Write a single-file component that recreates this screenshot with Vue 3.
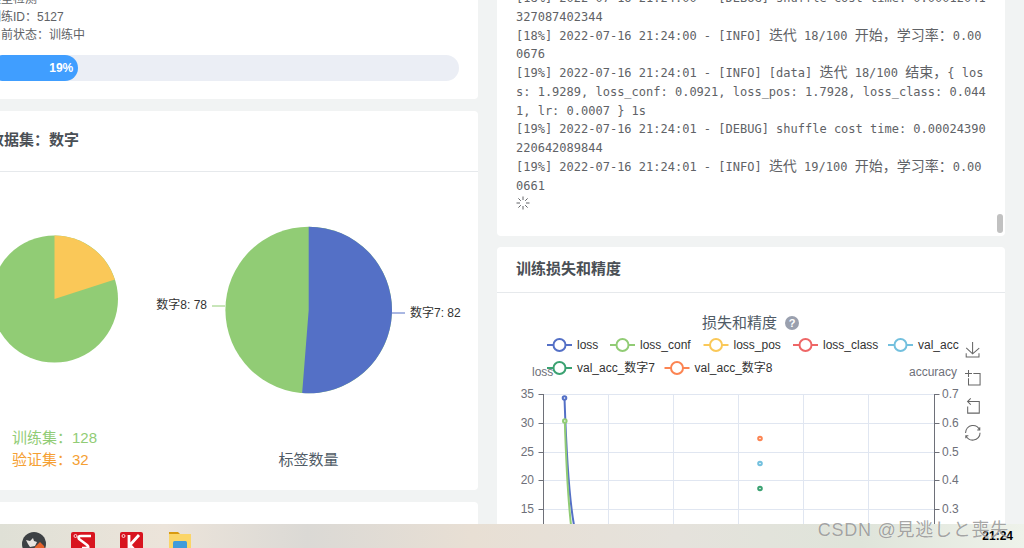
<template>
  <div class="screen">
    <div class="page">
      <div class="col col-left">
        <section class="card info-card">
          <p v-for="line in infoLines" :key="line" class="info-line">{{ line }}</p>
          <div class="progress">
            <div class="progress-bar" :style="{ width: progress + '%' }">{{ progress }}%</div>
          </div>
        </section>

        <section class="card data-card">
          <header class="card-head data-head">数据集：数字</header>
          <div class="data-body">
            <div class="data-split">
              <svg class="split-pie" viewBox="0 0 169 160" width="169" height="160">
                <circle cx="84.5" cy="80" r="63.5" fill="#91cc75" />
                <path :d="slice(84.5, 80, 63.5, 0, 72)" fill="#fac858" />
              </svg>
              <div class="split-text">
                <div class="split-train">训练集：128</div>
                <div class="split-val">验证集：32</div>
              </div>
            </div>
            <div class="data-labels">
              <svg class="label-pie" viewBox="0 0 339 190" width="339" height="190">
                <circle cx="169.7" cy="85" r="83.3" fill="#91cc75" />
                <path :d="slice(169.7, 85, 83.3, 0, 184.5)" fill="#5470c6" />
                <path d="M73 81h13" stroke="#91cc75" fill="none" />
                <path d="M253 88h13" stroke="#5470c6" fill="none" />
                <text x="68" y="84" text-anchor="end" class="pie-label">数字8: 78</text>
                <text x="271" y="92" class="pie-label">数字7: 82</text>
              </svg>
              <div class="label-title">标签数量</div>
            </div>
          </div>
        </section>

        <section class="card empty-card"></section>
      </div>

      <div class="col col-right">
        <section class="card log-card">
          <div v-for="(line, i) in logLines" :key="i" class="log-line">
            <template v-for="(part, j) in splitLine(line)" :key="j">
              <span v-if="part.zh" class="log-zh">{{ part.text }}</span>
              <template v-else>{{ part.text }}</template>
            </template>
          </div>
          <svg class="spinner" viewBox="0 0 14 14" width="14" height="14">
            <path d="M7 0.5v3.5M7 10v3.5M0.5 7h3.5M10 7h3.5M2.4 2.4l2.4 2.4M9.2 9.2l2.4 2.4M11.6 2.4L9.2 4.8M4.8 9.2l-2.4 2.4" stroke="#606266" stroke-width="1" fill="none" />
          </svg>
          <div class="log-thumb"></div>
        </section>

        <section class="card chart-card">
          <header class="card-head chart-head">训练损失和精度</header>
          <svg class="chart" viewBox="0 0 508 240" width="508" height="240">
            <!-- grid -->
            <g stroke="#e0e6f1" fill="none">
              <path v-for="y in gridY" :key="y" :d="`M46.5 ${y}H437`" />
              <path v-for="x in gridX" :key="x" :d="`M${x} 101V240`" />
            </g>
            <!-- axes -->
            <g stroke="#6e7079" fill="none">
              <path d="M46.5 101V240M437.5 101V240" />
              <path v-for="y in gridY" :key="'t' + y" :d="`M41.5 ${y}h5M437.5 ${y}h5`" />
            </g>
            <g class="tick">
              <text v-for="(t, i) in leftTicks" :key="t" x="37" :y="gridY[i] + 3" text-anchor="end">{{ t }}</text>
              <text v-for="(t, i) in rightTicks" :key="t" x="445" :y="gridY[i] + 3">{{ t }}</text>
              <text x="35" y="83">loss</text>
              <text x="412" y="83">accuracy</text>
            </g>

            <!-- series -->
            <path d="M67.5 105C69 150 72 205 77 232" stroke="#5470c6" stroke-width="2" fill="none" />
            <path d="M67.8 128C69 165 71 205 74 232" stroke="#91cc75" stroke-width="2" fill="none" />
            <circle cx="67.5" cy="105" r="1.8" fill="#fff" stroke="#5470c6" stroke-width="2" />
            <circle cx="67.8" cy="128" r="1.8" fill="#fff" stroke="#91cc75" stroke-width="2" />
            <circle cx="263" cy="145.5" r="1.8" fill="#fff" stroke="#fc8452" stroke-width="2" />
            <circle cx="263" cy="170.5" r="1.8" fill="#fff" stroke="#73c0de" stroke-width="2" />
            <circle cx="263" cy="195.5" r="1.8" fill="#fff" stroke="#3ba272" stroke-width="2" />

            <!-- title -->
            <text x="205" y="35" class="chart-title">损失和精度</text>
            <circle cx="295" cy="30" r="7" fill="#9aa0ae" />
            <text x="295" y="34" text-anchor="middle" class="help">?</text>

            <!-- legend -->
            <g v-for="item in legend" :key="item.name">
              <path :d="`M${item.x} ${item.y}h25`" :stroke="item.color" stroke-width="2" fill="none" />
              <circle :cx="item.x + 12.5" :cy="item.y" r="6" fill="#fff" :stroke="item.color" stroke-width="2" />
              <text :x="item.x + 30" :y="item.y + 4" class="legend-text">{{ item.name }}</text>
            </g>

            <!-- toolbox -->
            <g v-for="tool in tools" :key="tool.y" :transform="`translate(468 ${tool.y}) scale(0.26)`">
              <path :d="tool.d" stroke="#666" stroke-width="4" fill="none" />
            </g>
          </svg>
        </section>
      </div>
    </div>

    <footer class="taskbar">
      <div class="task-icons">
        <svg viewBox="0 0 24 24" width="24" height="24">
          <circle cx="12" cy="12" r="12" fill="#3d4144" />
          <path d="M4 8l4 1 3-3 1 3 3 1-2 4-5 1-2-3z" fill="#e8e4e0" />
          <path d="M9 24l4-9 5-5 4 4 2 6-5 5z" fill="#e5622c" />
        </svg>
        <svg viewBox="0 0 24 24" width="24" height="24">
          <rect width="24" height="24" rx="2" fill="#d8141f" />
          <circle cx="4.5" cy="4" r="1.5" fill="none" stroke="#fff" stroke-width="0.8" />
          <path d="M20 4H10Q6.5 4 8 7l8 6q3 3-1 3H11" stroke="#fff" stroke-width="2.6" fill="none" />
        </svg>
        <svg viewBox="0 0 24 24" width="24" height="24">
          <rect width="23" height="24" rx="2" fill="#d8141f" />
          <circle cx="3.5" cy="4" r="1.5" fill="none" stroke="#fff" stroke-width="0.8" />
          <path d="M9 3v21M19 3l-9 10 10 11" stroke="#fff" stroke-width="2.8" fill="none" />
        </svg>
        <svg viewBox="0 0 22 24" width="22" height="24">
          <path d="M0 0h9l2 2v4H0z" fill="#d99a10" />
          <rect y="2" width="22" height="22" fill="#fbd568" />
          <rect x="4" y="9" width="14" height="15" rx="1.5" fill="#3f9bdc" />
        </svg>
      </div>
      <span class="clock">21:24</span>
    </footer>
    <div class="watermark">CSDN @見逃しと喪失</div>
  </div>
</template>

<script setup>
const progress = 19

const infoLines = ['模型检测', '训练ID：5127', '当前状态：训练中']

const logLines = [
  '[18%] 2022-07-16 21:24:00 - [DEBUG] shuffle cost time: 0.00012041',
  '327087402344',
  '[18%] 2022-07-16 21:24:00 - [INFO] 迭代 18/100 开始，学习率：0.00',
  '0676',
  '[19%] 2022-07-16 21:24:01 - [INFO] [data] 迭代 18/100 结束，{ los',
  's: 1.9289, loss_conf: 0.0921, loss_pos: 1.7928, loss_class: 0.044',
  '1, lr: 0.0007 } 1s',
  '[19%] 2022-07-16 21:24:01 - [DEBUG] shuffle cost time: 0.00024390',
  '220642089844',
  '[19%] 2022-07-16 21:24:01 - [INFO] 迭代 19/100 开始，学习率：0.00',
  '0661'
]

// cjk runs are set larger than the mono text
function splitLine(line) {
  return line.split(/([\u4e00-\u9fff，：]+)/).filter(Boolean).map((text) => ({
    text,
    zh: /[\u4e00-\u9fff，：]/.test(text)
  }))
}

function slice(cx, cy, r, from, to) {
  const pt = (deg) => {
    const a = (deg - 90) * Math.PI / 180
    return `${cx + r * Math.cos(a)} ${cy + r * Math.sin(a)}`
  }
  return `M${cx} ${cy}L${pt(from)}A${r} ${r} 0 ${to - from > 180 ? 1 : 0} 1 ${pt(to)}Z`
}

const gridY = [101.5, 130.5, 159.5, 187.5, 216.5]
const gridX = [111.5, 176.5, 241.5, 306.5, 371.5]
const leftTicks = ['35', '30', '25', '20', '15']
const rightTicks = ['0.7', '0.6', '0.5', '0.4', '0.3']

const legend = [
  { name: 'loss', x: 50, y: 52, color: '#5470c6' },
  { name: 'loss_conf', x: 113, y: 52, color: '#91cc75' },
  { name: 'loss_pos', x: 206.5, y: 52, color: '#fac858' },
  { name: 'loss_class', x: 296, y: 52, color: '#ee6666' },
  { name: 'val_acc', x: 391, y: 52, color: '#73c0de' },
  { name: 'val_acc_数字7', x: 50, y: 75, color: '#3ba272' },
  { name: 'val_acc_数字8', x: 167.5, y: 75, color: '#fc8452' }
]

const tools = [
  { y: 49, d: 'M4.7,22.9L29.3,45.5L54.7,23.4M4.6,43.6L4.6,58L53.8,58L53.8,43.6M29.2,45.1L29.2,0' },
  { y: 77, d: 'M0,13.5h26.9 M13.5,26.9V0 M32.1,13.5H58V58H13.5 V32.1' },
  { y: 105, d: 'M22,1.4L9.9,13.5l12.3,12.3 M10.3,13.5H54.9v44.6 H10.3v-25.6' },
  { y: 132, d: 'M3.8,33.4 M47,18.9h9.8V8.7 M56.3,20.1 C52.1,9,40.5,0.6,26.8,2.1C12.6,3.7,1.6,16.2,2.1,30.6 M13,41.1H3.1v10.2 M3.7,39.9c4.2,11.1,15.8,19.5,29.5,18 c14.2-1.6,25.2-14.1,24.7-28.5' }
]
</script>

<style>
html, body {
  margin: 0;
  overflow: hidden;
}
</style>

<style scoped>
.screen {
  position: relative;
  display: flex;
  flex-direction: column;
  width: 1024px;
  height: 548px;
  overflow: hidden;
  background: #f1f3f3;
  font-family: "Liberation Sans", "Noto Sans CJK SC", sans-serif;
}

.page {
  flex: 1;
  min-height: 0;
  display: flex;
  gap: 19px;
  margin-left: -30px;
  overflow: hidden;
}

.col {
  width: 508px;
  flex: none;
  display: flex;
  flex-direction: column;
}

.col-left {
  gap: 12px;
  margin-top: -10px;
}

.col-right {
  gap: 11px;
  margin-top: -13px;
}

.card {
  flex: none;
  background: #fff;
  border-radius: 4px;
}

.card-head {
  display: flex;
  align-items: center;
  box-sizing: border-box;
  padding: 0 19px;
  border-bottom: 1px solid #e6e9ec;
  font-size: 15px;
  font-weight: bold;
  color: #4a4f55;
}

.info-card {
  padding: 0 19px 18px;
}

.info-line {
  margin: 0;
  font-size: 12px;
  line-height: 18px;
  color: #606266;
}

.progress {
  height: 26px;
  margin-top: 11px;
  border-radius: 13px;
  background: #ebeef5;
  overflow: hidden;
}

.progress-bar {
  box-sizing: border-box;
  height: 100%;
  padding-right: 5px;
  border-radius: 13px;
  background: #409eff;
  color: #fff;
  font-size: 12px;
  font-weight: bold;
  line-height: 26px;
  text-align: right;
}

.data-card {
  height: 379px;
}

.data-head {
  height: 61px;
  padding-bottom: 6px;
}

.data-body {
  display: flex;
}

.data-split {
  width: 169px;
  flex: none;
}

.split-pie {
  display: block;
  margin-top: 47px;
}

.split-text {
  margin-top: 48px;
  padding-left: 42px;
  font-size: 15px;
  line-height: 22px;
}

.split-train {
  color: #91cc75;
}

.split-val {
  color: #f5a033;
}

.data-labels {
  width: 339px;
  flex: none;
}

.label-pie {
  display: block;
  margin-top: 53px;
}

.label-title {
  margin-top: 34px;
  text-align: center;
  font-size: 15px;
  line-height: 22px;
  color: #505b66;
}

.pie-label {
  font-size: 12px;
  fill: #333;
}

.empty-card {
  height: 60px;
}

.log-card {
  position: relative;
  box-sizing: border-box;
  height: 249px;
  padding: 2px 19px 0;
}

.log-line {
  height: 18.75px;
  font-family: "DejaVu Sans Mono", "Noto Sans CJK SC", monospace;
  font-size: 12px;
  line-height: 18.75px;
  color: #606266;
  white-space: pre;
}

.log-zh {
  font-family: "Noto Sans CJK SC", sans-serif;
  font-size: 14px;
  line-height: 0;
}

.spinner {
  display: block;
  margin-top: 1px;
}

.log-thumb {
  position: absolute;
  top: 227px;
  right: 2px;
  width: 6px;
  height: 19px;
  border-radius: 3px;
  background: #c1c1c1;
}

.chart-card {
  height: 300px;
}

.chart-head {
  height: 46px;
  padding-bottom: 5px;
}

.chart {
  display: block;
}

.tick text {
  font-size: 12px;
  fill: #6e7079;
}

.chart-title {
  font-size: 15px;
  fill: #505b66;
}

.help {
  font-size: 11px;
  font-weight: bold;
  fill: #fff;
}

.legend-text {
  font-size: 12px;
  fill: #333;
}

.taskbar {
  position: relative;
  flex: none;
  display: flex;
  align-items: flex-start;
  justify-content: space-between;
  height: 24px;
  overflow: hidden;
  background: linear-gradient(90deg, #dfe0d6 0%, #ece4da 16%, #dbd9d5 30%, #e8dfd4 46%, #e5e2dc 66%, #dfe4da 84%, #eef2ea 100%);
}

.task-icons {
  display: flex;
  align-items: flex-start;
  gap: 25px;
  padding: 8px 0 0 22px;
}

.clock {
  margin: 5px 11px 0 0;
  font-size: 12px;
  font-weight: bold;
  color: #000;
}

.watermark {
  position: absolute;
  right: 15px;
  top: 518px;
  font-family: "Liberation Sans", "Noto Sans CJK JP", sans-serif;
  font-size: 18px;
  letter-spacing: 0.75px;
  line-height: 24px;
  color: rgba(90, 90, 90, 0.55);
  text-shadow: 0 0 1px rgba(255, 255, 255, 0.8);
  white-space: nowrap;
}
</style>
